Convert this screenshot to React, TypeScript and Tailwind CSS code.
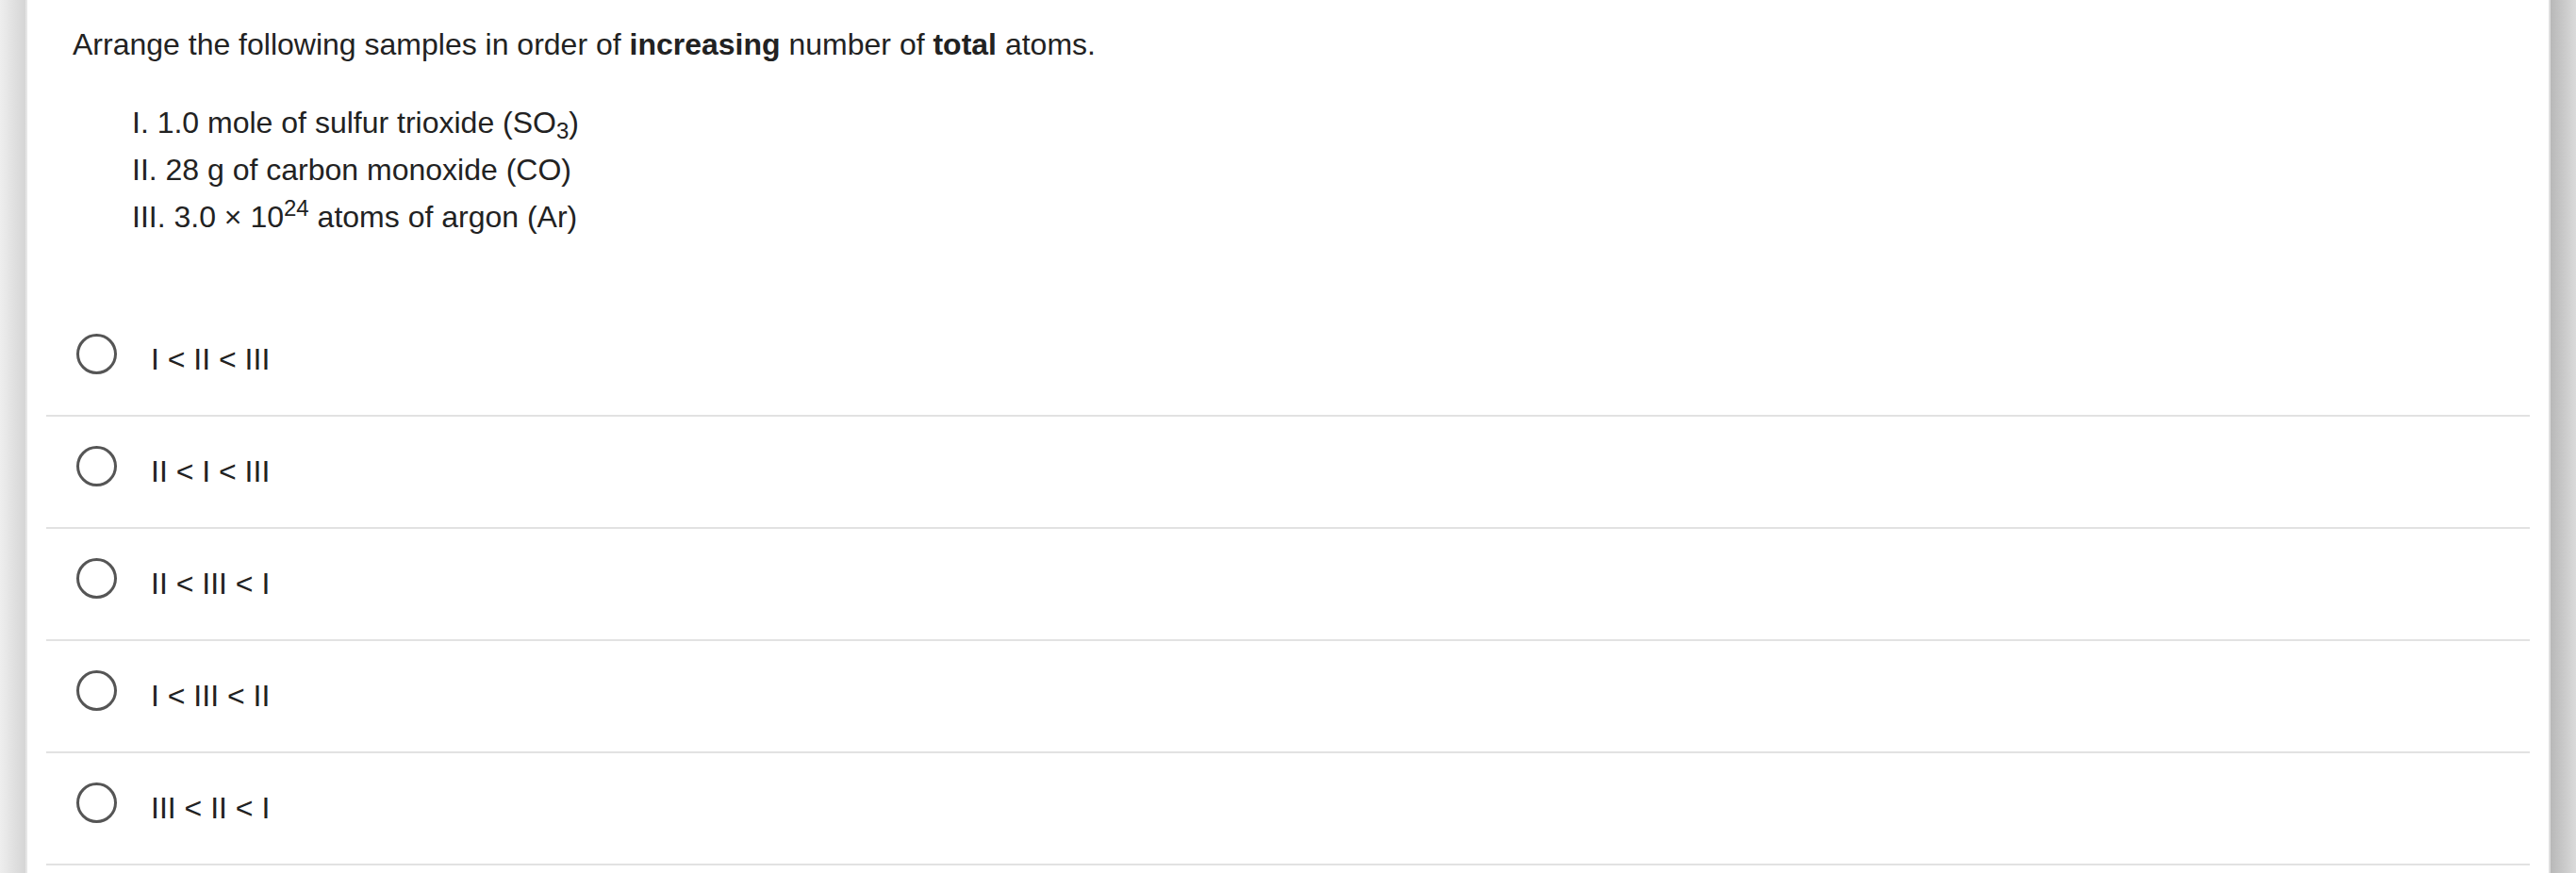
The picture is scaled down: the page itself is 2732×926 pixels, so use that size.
const options = ['I < II < III', 'II < I < III', 'II < III < I', 'I < III < II', 'III < II < I'];

export default function App() {
  return (
    <div
      className="flex h-[926px] w-full bg-white text-[#222222]"
      style={{ fontFamily: '"Liberation Sans", Arial, sans-serif' }}
    >
      {/* left gutter */}
      <div className="w-[29px] shrink-0 border-r-2 border-[#e6e6e6] bg-linear-to-r from-[#eeeeee] to-[#d5d5d5]" />

      <main className="flex-1 px-[20px] pt-[24px]">
        <p className="pl-[28px] text-[32px] leading-[47px]">
          Arrange the following samples in order of <b>increasing</b> number of <b>total</b> atoms.
        </p>

        <ul className="mt-[34px] pl-[91px] text-[32px] leading-[50px]">
          <li>
            I. 1.0 mole of sulfur trioxide (SO<sub className="text-[0.75em] leading-none">3</sub>)
          </li>
          <li>II. 28 g of carbon monoxide (CO)</li>
          <li>
            III. 3.0 × 10<sup className="text-[0.75em] leading-none">24</sup> atoms of argon (Ar)
          </li>
        </ul>

        <div className="mt-[68px]">
          {options.map((opt) => (
            <label
              key={opt}
              className="flex items-start gap-[36px] border-b-2 border-[#e2e2e2] pt-[31px] pb-[35px] pl-[32px]"
            >
              <span className="h-[43px] w-[43px] shrink-0 rounded-full border-[3.5px] border-[#555555]" />
              <span className="mt-[4px] text-[32px] leading-[47px]">{opt}</span>
            </label>
          ))}
        </div>
      </main>

      {/* right gutter */}
      <div className="w-[29px] shrink-0 border-l-2 border-[#dedede] bg-linear-to-r from-[#b8b8b8] to-[#dadada]" />
    </div>
  );
}
